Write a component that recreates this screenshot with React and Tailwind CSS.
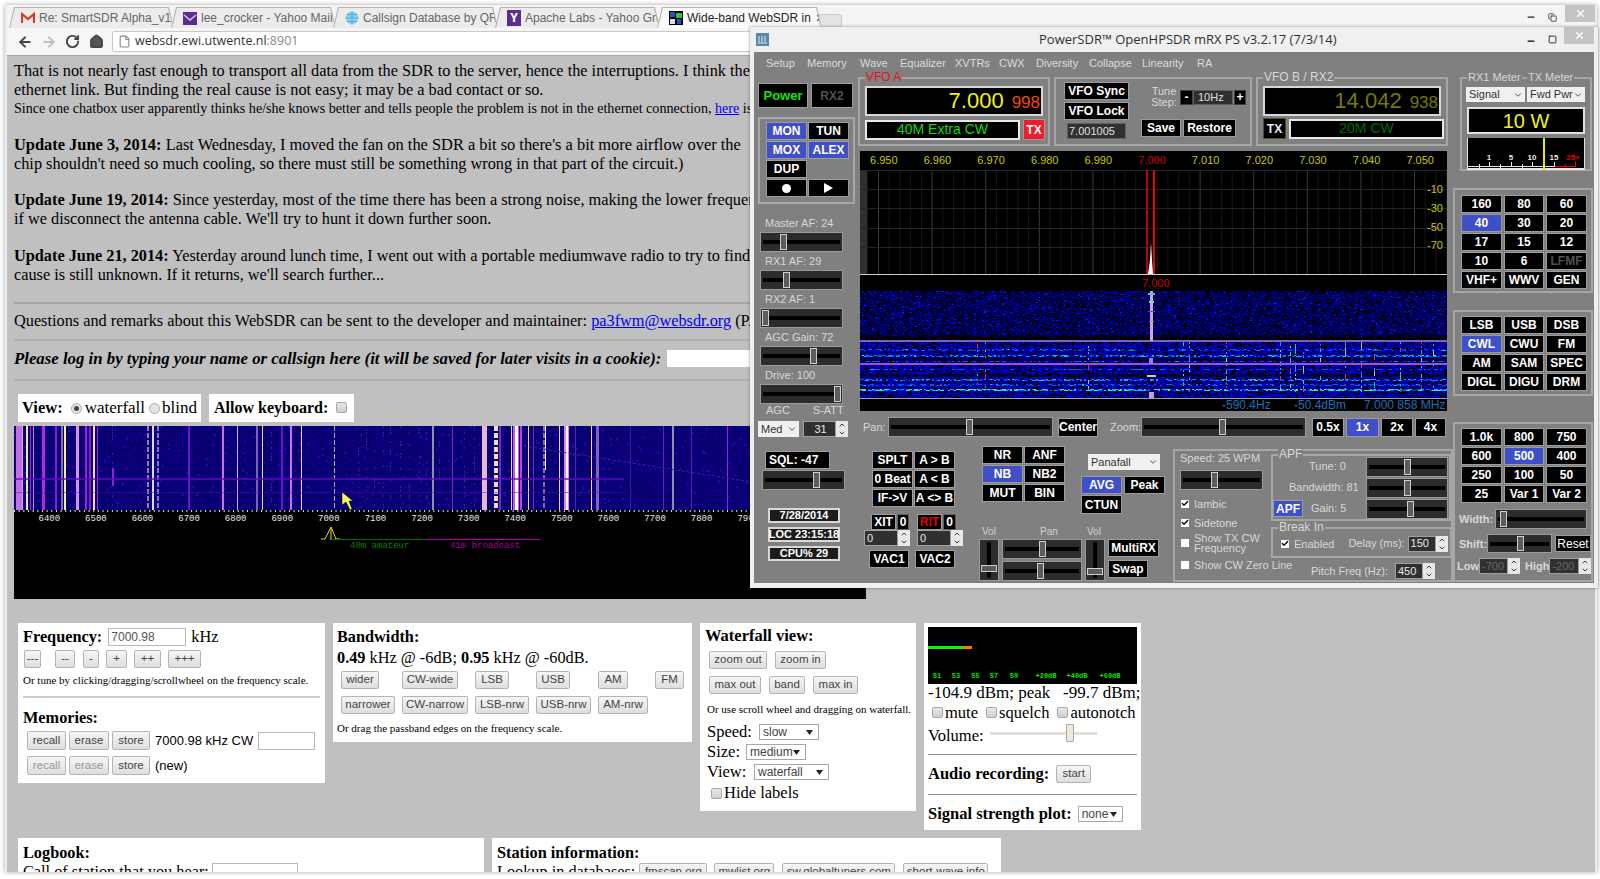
import React from 'react';
import { ArrowLeft, ArrowRight, RotateCw, Home, File, X, Minus, Square, Copy, Check, ChevronDown, ChevronUp, Volume1 } from 'lucide-react';

// --- pixel noise helpers for the waterfalls ---
const seeded = (seed) => {
  let s = seed;
  return () => (s = (s * 16807) % 2147483647) / 2147483647;
};

const Pixels = ({ cells }) =>
  Object.entries(cells).map(([color, d]) => <path key={color} d={d} fill={color} />);

const addCell = (cells, color, x, y, w, h) => {
  cells[color] = (cells[color] || '') + `M${x} ${y}h${w}v${h}h${-w}z`;
};

// browser waterfall, purple on blue: x, width, colour, opacity, dashed
const WEB_LINES = [
  [2, 6, '#c070e0', 1], [8, 1, '#e0a0f0', 1], [12, 2, '#f0e890', 1], [16, 1, '#a020e0', 1], [19, 1, '#d090e0', 0.9],
  [28, 3, '#c030e8', 0.9], [41, 2, '#9020e0', 0.9], [47, 2, '#8070b0', 1], [50, 2, '#f8f080', 1], [62, 3, '#d890e8', 1],
  [71, 2, '#a020e0', 1], [75, 2, '#9020e0', 0.9], [79, 2, '#f0e0a0', 1], [83, 1, '#a020e0', 1],
  [133, 2, '#9080a8', 1, true], [138, 2, '#e8d0f0', 1], [143, 2, '#9070d0', 1, true], [174, 2, '#7010d0', 1],
  [208, 2, '#d070e0', 1], [223, 1, '#d0b0e0', 1], [242, 2, '#8060b0', 1], [248, 1, '#e8d8b0', 1], [267, 2, '#7010d0', 1],
  [276, 2, '#d070e0', 1], [287, 1, '#e8d0c0', 1], [320, 1, '#b0b0a0', 1, true],
  [418, 2, '#9090a0', 1], [438, 1, '#8020d0', 1], [468, 5, '#e8b8d0', 1], [480, 4, '#f0e0b0', 1, true], [485, 2, '#8020d0', 1],
  [497, 1, '#e0d8c0', 1], [499, 6, '#d050f0', 1], [501, 3, '#ffffff', 1], [506, 2, '#c040e0', 1], [514, 1, '#f0d890', 1],
  [519, 1, '#8020d0', 1], [529, 2, '#9060c0', 1, true], [545, 1, '#e0d8e0', 1], [550, 5, '#e080f0', 1], [552, 2, '#ffffff', 1],
  [561, 1, '#5020c0', 1], [577, 1, '#f0d8a0', 1], [582, 3, '#8060c0', 1], [616, 1, '#4018b0', 1], [649, 1, '#6020c0', 1],
  [658, 2, '#9090a0', 1], [677, 1, '#6018c0', 1], [713, 1, '#a020e0', 1],
];

const WebWaterfall = () => {
  const rnd = seeded(77);
  const cells = {};
  for (let y = 0; y < 84; y += 2) {
    for (let x = 0; x < 852; x += 2) {
      const r = rnd();
      if (r < 0.2) addCell(cells, '#0d0084', x, y, 2, 2);
      else if (r < 0.35) addCell(cells, '#070068', x, y, 2, 2);
      else if (r < 0.37) addCell(cells, '#1c0c98', x, y, 2, 2);
    }
  }
  // scattered faint carriers around 7100
  const marks = [98, 344, 352, 360, 369, 376, 386, 395, 405, 412, 425, 450, 460, 286, 257];
  marks.forEach((mx) => {
    for (let y = 0; y < 84; y += 3) {
      if (rnd() < 0.4) addCell(cells, '#4a14b0', mx, y, 1, 2);
    }
  });
  return (
    <svg width="852" height="84" className="block">
      <rect width="852" height="84" fill="#090074" />
      <Pixels cells={cells} />
      {WEB_LINES.map(([x, w, c, o, dashed], i) =>
        dashed ? (
          <line key={i} x1={x + w / 2} x2={x + w / 2} y1="0" y2="84" stroke={c} strokeWidth={w} strokeDasharray="5 2" />
        ) : (
          <rect key={i} x={x} y="0" width={w} height={x === 531 ? 44 : 84} fill={c} opacity={o} />
        )
      )}
      <rect x="531" y="0" width="1" height="44" fill="#f0f0e0" />
      <rect x="98" y="42" width="2" height="18" fill="#9020d0" />
      <rect x="0" y="52" width="610" height="2" fill="#6808c0" opacity="0.7" />
      <rect x="0" y="66" width="610" height="1" fill="#5808b0" opacity="0.5" />
      <line x1="510" y1="20" x2="852" y2="74" stroke="#5018b0" strokeWidth="1" strokeDasharray="3 2" />
    </svg>
  );
};

const SdrWaterfall = () => {
  const rnd = seeded(4242);
  const cells = {};
  const W = 587;
  // quiet part on top
  for (let y = 0; y < 48; y += 1) {
    const fade = y > 42 ? (48 - y) / 6 : 1;
    for (let x = 0; x < W; x += 2) {
      const r = rnd() * fade;
      if (r > 0.97) addCell(cells, '#1414d8', x, y, 2, 1);
      else if (r > 0.82) addCell(cells, '#0000a8', x, y, 2, 1);
      else if (r > 0.5) addCell(cells, '#000070', x, y, 2, 1);
      else if (r > 0.18) addCell(cells, '#000038', x, y, 2, 1);
    }
  }
  // busy part with horizontal bursts
  const rowLevel = (y) => {
    if ([98, 99].includes(y)) return 5;
    if ([88, 89, 64, 65].includes(y)) return 3.5;
    if ([58, 59, 70, 78, 93, 94].includes(y)) return 2.6;
    if ([67, 68, 69, 83, 84, 85].includes(y)) return 0.3;
    return 1.2;
  };
  const cols = ['#000068', '#0000c8', '#0058e8', '#00b8d8', '#30f090'];
  for (let y = 51; y < 107; y += 1) {
    const lvl = rowLevel(y);
    for (let x = 0; x < W; x += 2) {
      const v = Math.floor(rnd() * lvl + rnd() * 0.7);
      if (v > 0 || rnd() < 0.55) addCell(cells, cols[Math.min(v, 4)], x, y, 2, 1);
    }
  }
  // carrier columns
  const carriers = [117, 125, 228, 323, 329, 366, 420, 430, 435, 443, 460, 485, 501, 514, 540, 561, 573];
  const tints = ['#20d080', '#d03060', '#3090f0', '#c0c080', '#20d090'];
  carriers.forEach((cx, i) => {
    for (let y = 51; y < 100; y += 2) {
      if (rnd() < 0.4) addCell(cells, tints[(i + Math.floor(y / 8)) % 5], cx, y, 1, 2);
    }
  });
  return (
    <svg width={W} height="107" className="block">
      <rect width={W} height="107" fill="#000" />
      <Pixels cells={cells} />
      <rect x="0" y="49" width={W} height="2" fill="#8060b8" />
      <rect x="0" y="72" width={W} height="2" fill="#a050d0" />
      <rect x="290" y="0" width="3" height="50" fill="#d0a0e0" />
      <rect x="288" y="2" width="7" height="2" fill="#40d0c0" />
      <rect x="289" y="10" width="5" height="2" fill="#60f090" />
      <rect x="288" y="20" width="7" height="1" fill="#3060f0" />
      <rect x="289" y="30" width="5" height="1" fill="#8090f0" />
      <rect x="289" y="67" width="4" height="6" fill="#9080e0" />
      <rect x="287" y="84" width="9" height="2" fill="#d0d0a0" />
      <rect x="289" y="101" width="5" height="6" fill="#c0a0e0" />
    </svg>
  );
};

// --- PowerSDR widgets ---
const Btn = ({ children, className = '', on, dim }) => (
  <div
    className={`flex items-center justify-center whitespace-nowrap border border-[#9c9c9c] text-[12px] font-bold leading-none ${
      on ? 'bg-[#3f4fc8] text-white' : 'bg-black'
    } ${dim ? 'text-[#505050]' : 'text-white'} ${className}`}
  >
    {children}
  </div>
);

const Slider = ({ pct = 50, className = '' }) => (
  <div className={`relative flex shrink-0 items-center border border-[#9a9a9a] bg-[#2c2c2c] px-[2px] ${className}`}>
    <div className="h-[4px] w-full bg-black" />
    <div
      className="absolute top-[1px] bottom-[1px] w-[7px] border border-[#d0d0d0] bg-[#5c5c5c]"
      style={{ left: `calc(${pct}% - 3px)` }}
    />
  </div>
);

const VSlider = ({ pct = 50 }) => (
  <div className="relative flex h-[42px] w-[20px] shrink-0 justify-center border border-[#9a9a9a] bg-[#2c2c2c] py-[2px]">
    <div className="h-full w-[4px] bg-black" />
    <div
      className="absolute left-[1px] right-[1px] h-[7px] border border-[#d0d0d0] bg-[#5c5c5c]"
      style={{ top: `${pct}%` }}
    />
  </div>
);

const Lbl = ({ children, className = '' }) => (
  <div className={`whitespace-nowrap text-[11px] leading-[12px] text-[#d8d8d8] ${className}`}>{children}</div>
);

const Group = ({ label, labelClass = 'text-[12px] text-[#d8d8d8]', className = '', children, second }) => (
  <div className={`relative shrink-0 border-2 border-[#a6a6a6] ${className}`}>
    {label && (
      <div className={`absolute left-[5px] top-[-8px] bg-[#808080] px-[1px] leading-[12px] ${labelClass}`}>
        {label}
      </div>
    )}
    {second && (
      <div className="absolute left-[65px] top-[-8px] bg-[#808080] px-[1px] text-[11px] leading-[12px] text-[#d8d8d8]">
        {second}
      </div>
    )}
    {children}
  </div>
);

const Spin = ({ value, className = '', faded, light }) => (
  <div className={`flex shrink-0 items-stretch ${className}`}>
    <div
      className={`flex flex-1 items-center overflow-hidden pl-[2px] text-[11px] leading-none ${
        light ? 'justify-center border border-[#a0a0a0] bg-[#303030]' : 'border border-[#a0a0a0] bg-[#303030]'
      } ${faded ? 'text-[#6a6a6a]' : 'text-[#e8e8e8]'}`}
    >
      {value}
    </div>
    <div className="flex w-[12px] flex-col items-center justify-center bg-[#e8e8e8] text-[#404040]">
      <ChevronUp size={8} strokeWidth={3} />
      <ChevronDown size={8} strokeWidth={3} />
    </div>
  </div>
);

const WinSelect = ({ value, className = '' }) => (
  <div className={`flex shrink-0 items-center justify-between bg-[#f0f0f0] pl-[3px] pr-[2px] text-[11px] leading-none text-[#303030] ${className}`}>
    <span>{value}</span>
    <ChevronDown size={10} strokeWidth={2} />
  </div>
);

const WinCheck = ({ checked }) => (
  <div className="flex h-[10px] w-[10px] shrink-0 items-center justify-center border border-[#808080] bg-white text-black">
    {checked && <Check size={9} strokeWidth={4} />}
  </div>
);

const CheckRow = ({ checked, children, className = '' }) => (
  <div className={`flex items-center gap-[4px] text-[11px] leading-[10px] text-[#d8d8d8] ${className}`}>
    <WinCheck checked={checked} />
    <span>{children}</span>
  </div>
);

const SliderBlock = ({ label, pct }) => (
  <div className="flex h-[38px] flex-col pt-[1px]">
    <Lbl className="ml-[7px] h-[13px]">{label}</Lbl>
    <Slider pct={pct} className="ml-[2px] mt-[2px] h-[20px] w-[83px]" />
  </div>
);

const BUTTON_GRID = 'grid grid-cols-[41px_40px_41px] gap-x-[2px] gap-y-[1px] auto-rows-[18px]';

const LeftColumn = () => (
  <div className="w-[104px] shrink-0 pl-[4px]">
    <div className="mt-[9px] flex gap-[3px]">
      <Btn className="h-[25px] w-[50px] !text-[#14e014] text-[13px]">Power</Btn>
      <Btn dim className="h-[25px] w-[42px]">RX2</Btn>
    </div>
    <div className="mt-[9px] h-[87px] w-[97px] border-2 border-[#a8a8a8] pl-[6px] pt-[3px]">
      <div className="grid grid-cols-[41px_41px] gap-x-[1px] gap-y-[1px] auto-rows-[18px]">
        <Btn on>MON</Btn>
        <Btn>TUN</Btn>
        <Btn on>MOX</Btn>
        <Btn on>ALEX</Btn>
        <Btn>DUP</Btn>
        <div />
        <Btn><span className="h-[9px] w-[9px] rounded-full bg-white" /></Btn>
        <Btn>
          <svg width="9" height="10"><polygon points="0,0 9,5 0,10" fill="#fff" /></svg>
        </Btn>
      </div>
    </div>
    <div className="mt-[12px] flex flex-col">
      <SliderBlock label="Master AF:  24" pct={27} />
      <SliderBlock label="RX1 AF:  29" pct={31} />
      <SliderBlock label="RX2 AF:  1" pct={5} />
      <SliderBlock label="AGC Gain:  72" pct={64} />
      <SliderBlock label="Drive:  100" pct={94} />
    </div>
    <div className="ml-[8px] mt-[-3px] flex h-[14px] items-center gap-[23px]">
      <Lbl>AGC</Lbl>
      <Lbl>S-ATT</Lbl>
    </div>
    <div className="mt-[4px] flex gap-[4px]">
      <WinSelect value="Med" className="h-[16px] w-[41px]" />
      <Spin value="31" light className="h-[16px] w-[45px]" />
    </div>
    <Btn className="ml-[7px] mt-[14px] h-[18px] w-[65px] !justify-start pl-[3px]">SQL: -47</Btn>
    <Slider pct={66} className="ml-[4px] mt-[1px] h-[20px] w-[83px]" />
    <div className="ml-[10px] mt-[18px] flex w-[72px] flex-col gap-[4px]">
      {['7/28/2014', 'LOC 23:15:18', 'CPU%  29'].map((t) => (
        <div
          key={t}
          className="flex h-[15px] items-center justify-center whitespace-nowrap border-2 border-[#d8d8d8] bg-[#1c1c1c] text-[11px] font-bold leading-none text-white"
        >
          {t}
        </div>
      ))}
    </div>
  </div>
);

const TopGroups = () => (
  <div className="mt-[3px] flex gap-[4px]">
    <Group label="VFO A" labelClass="text-[12px] text-[#f01010]" className="h-[69px] w-[192px] pl-[5px] pt-[7px]">
      <div className="flex h-[30px] w-[178px] items-baseline justify-end border-2 border-[#d8d8d8] bg-black pr-[1px] leading-[26px]">
        <span className="text-[22px] text-[#f0f020]">7.000</span>
        <span className="ml-[8px] text-[17px] text-[#f04a00]">998</span>
      </div>
      <div className="mt-[3px] flex items-center gap-[3px]">
        <div className="flex h-[20px] w-[155px] items-center justify-center border-2 border-[#e8e8e8] bg-black text-[14px] text-[#10d810]">
          40M Extra CW
        </div>
        <div className="flex h-[21px] w-[22px] items-center justify-center border border-[#9c9c9c] bg-[#f01c2c] text-[12px] font-bold text-white">
          TX
        </div>
      </div>
    </Group>
    <Group className="flex h-[69px] w-[198px]">
      <div className="w-[85px] shrink-0 pl-[8px] pt-[3px]">
        <Btn className="h-[18px] w-[65px]">VFO Sync</Btn>
        <Btn className="mt-[2px] h-[18px] w-[65px]">VFO Lock</Btn>
        <div className="ml-[3px] mt-[3px] flex h-[16px] w-[59px] items-center border border-[#606060] bg-[#303030] pl-[1px] text-[11px] leading-none text-[#e0e0e0]">
          7.001005
        </div>
      </div>
      <div className="flex-1 pt-[4px]">
        <div className="flex h-[28px] items-center">
          <Lbl className="ml-[7px] w-[32px] !whitespace-normal text-center !leading-[11px]">Tune Step:</Lbl>
          <Btn className="h-[15px] w-[13px] !border-[#404040]">-</Btn>
          <div className="flex h-[15px] w-[40px] items-center border border-[#606060] bg-[#303030] pl-[4px] text-[11px] leading-none text-[#e0e0e0]">10Hz</div>
          <Btn className="ml-[1px] h-[15px] w-[12px] !border-[#404040]">+</Btn>
        </div>
        <div className="mt-[8px] flex gap-[2px]">
          <Btn className="h-[18px] w-[40px]">Save</Btn>
          <Btn className="h-[18px] w-[53px]">Restore</Btn>
        </div>
      </div>
    </Group>
    <Group label="VFO B / RX2" className="h-[69px] w-[192px] pl-[5px] pt-[7px]">
      <div className="flex h-[30px] w-[178px] items-baseline justify-end border-2 border-[#d8d8d8] bg-black pr-[1px] leading-[26px]">
        <span className="text-[22px] text-[#787800]">14.042</span>
        <span className="ml-[8px] text-[17px] text-[#787800]">938</span>
      </div>
      <div className="mt-[2px] flex items-center gap-[3px]">
        <div className="flex h-[21px] w-[23px] items-center justify-center border border-[#505030] bg-black text-[12px] font-bold text-[#e8e8e8]">
          TX
        </div>
        <div className="flex h-[20px] w-[155px] items-center justify-center border-2 border-[#e8e8e8] bg-black text-[14px] text-[#006800]">
          20M CW
        </div>
      </div>
    </Group>
  </div>
);

const FREQS = ['6.950', '6.960', '6.970', '6.980', '6.990', '7.000', '7.010', '7.020', '7.030', '7.040', '7.050'];

const Spectrum = () => (
  <div className="ml-[2px] mt-[5px] w-[587px] bg-black">
    <div className="ml-[-3px] grid h-[19px] w-[590px] grid-cols-11 items-center text-center text-[11px] leading-none">
      {FREQS.map((f) => (
        <span key={f} className={f === '7.000' ? 'text-[#d00000]' : 'text-[#c8c800]'}>{f}</span>
      ))}
    </div>
    <div className="relative h-[104px]">
      <svg width="587" height="104" className="block">
        <rect x="0" y="0" width="7" height="104" fill="#303030" />
        {Array.from({ length: 55 }).map((_, i) => {
          const x = 7.8 + i * 10.72;
          const major = i % 5 === 1;
          return <line key={i} x1={x} x2={x} y1="0" y2="104" stroke={major ? '#3c3c3c' : '#161616'} />;
        })}
        {[0, 19, 38, 58, 77].map((y) => (
          <line key={y} x1="0" x2="587" y1={y + 0.5} y2={y + 0.5} stroke="#242424" />
        ))}
        <rect x="286" y="0" width="2" height="104" fill="#c00000" />
        <rect x="293" y="0" width="2" height="104" fill="#f00000" />
        <path d="M288 104 L290 90 L291 72 L292 90 L293 104" fill="#fff" />
      </svg>
      {[['-10', 'top-[13px]'], ['-30', 'top-[32px]'], ['-50', 'top-[51px]'], ['-70', 'top-[69px]']].map(([t, c]) => (
        <span key={t} className={`absolute left-[567px] text-[11px] leading-[13px] text-[#c8c800] ${c}`}>{t}</span>
      ))}
    </div>
    <div className="h-[1px] bg-[#d0d0d0]" />
    <div className="h-[16px] pl-[282px] text-[11px] leading-[16px] text-[#c80000]">7.000</div>
    <SdrWaterfall />
    <div className="h-[1px] bg-[#a0a0a0]" />
    <div className="flex h-[12px] text-[12px] leading-[12px] text-[#1a70b8]">
      <span className="ml-[362px] w-[72px]">-590.4Hz</span>
      <span className="w-[70px]">-50.4dBm</span>
      <span className="whitespace-nowrap">7.000 858 MHz</span>
    </div>
  </div>
);

const PanRow = () => (
  <div className="mt-[6px] flex h-[20px] items-center">
    <Lbl className="ml-[5px] w-[25px]">Pan:</Lbl>
    <Slider pct={49} className="h-[20px] w-[165px]" />
    <Btn className="ml-[5px] h-[19px] w-[40px]">Center</Btn>
    <Lbl className="ml-[12px] w-[31px]">Zoom:</Lbl>
    <Slider pct={49} className="h-[20px] w-[165px]" />
    <Btn className="ml-[6px] h-[19px] w-[32px]">0.5x</Btn>
    <Btn on className="ml-[2px] h-[19px] w-[33px]">1x</Btn>
    <Btn className="ml-[2px] h-[19px] w-[32px]">2x</Btn>
    <Btn className="ml-[2px] h-[19px] w-[31px]">4x</Btn>
  </div>
);

const SplitSection = () => (
  <div className="w-[121px] shrink-0 pt-[5px]">
    <div className="ml-[14px] grid grid-cols-[41px_41px] gap-x-[1px] gap-y-[1px] auto-rows-[18px]">
      <Btn>SPLT</Btn><Btn>A &gt; B</Btn>
      <Btn>0 Beat</Btn><Btn>A &lt; B</Btn>
      <Btn>IF-&gt;V</Btn><Btn>A &lt;&gt; B</Btn>
    </div>
    <div className="ml-[6px] mt-[7px] flex gap-[7px]">
      <div className="w-[46px]">
        <div className="ml-[7px] flex gap-[1px]">
          <Btn className="h-[16px] w-[25px]">XIT</Btn>
          <Btn className="h-[16px] w-[12px] !border-[#606060]">0</Btn>
        </div>
        <Spin value="0" className="h-[16px] w-[46px]" />
      </div>
      <div className="w-[46px]">
        <div className="flex gap-[1px]">
          <Btn className="h-[16px] w-[25px] !text-[#e00000]">RIT</Btn>
          <Btn className="h-[16px] w-[13px] !border-[#606060]">0</Btn>
        </div>
        <Spin value="0" className="h-[16px] w-[46px]" />
      </div>
    </div>
    <div className="ml-[11px] mt-[4px] flex gap-[6px]">
      <Btn className="h-[18px] w-[40px]">VAC1</Btn>
      <Btn className="h-[18px] w-[40px]">VAC2</Btn>
    </div>
  </div>
);

const NoiseSection = () => (
  <div className="w-[194px] shrink-0">
    <div className="flex h-[79px]">
      <div className="ml-[3px] w-[99px] shrink-0">
        <div className="grid grid-cols-[41px_41px] gap-x-[1px] gap-y-[1px] auto-rows-[18px]">
          <Btn>NR</Btn><Btn>ANF</Btn>
          <Btn on>NB</Btn><Btn>NB2</Btn>
          <Btn>MUT</Btn><Btn>BIN</Btn>
        </div>
      </div>
      <div>
        <WinSelect value="Panafall" className="ml-[7px] mt-[8px] h-[16px] w-[72px]" />
        <div className="mt-[6px] flex gap-[2px]">
          <Btn on className="h-[18px] w-[41px]">AVG</Btn>
          <Btn className="h-[18px] w-[41px]">Peak</Btn>
        </div>
        <Btn className="mt-[1px] h-[19px] w-[41px]">CTUN</Btn>
      </div>
    </div>
    <div className="flex h-[14px] items-center text-[10px] leading-none text-[#d0d0d0]">
      <span className="ml-[3px] w-[58px]">Vol</span>
      <span className="w-[47px]">Pan</span>
      <span>Vol</span>
    </div>
    <div className="flex">
      <VSlider pct={62} />
      <div className="ml-[3px] flex flex-col gap-[2px]">
        <Slider pct={50} className="h-[20px] w-[80px]" />
        <Slider pct={47} className="h-[20px] w-[80px]" />
      </div>
      <div className="ml-[3px]"><VSlider pct={70} /></div>
      <div className="ml-[3px]">
        <Btn className="h-[18px] w-[51px]">MultiRX</Btn>
        <Btn className="mt-[3px] h-[18px] w-[40px]">Swap</Btn>
      </div>
    </div>
  </div>
);

const ApfRow = ({ children, pct }) => (
  <div className="flex h-[21px] items-center">
    <div className="flex w-[93px] items-center whitespace-nowrap">{children}</div>
    <Slider pct={pct} className="h-[20px] w-[82px]" />
  </div>
);

const CwSection = () => (
  <Group className="mt-[3px] flex h-[133px] w-[280px]">
    <div className="w-[96px] shrink-0 pl-[5px] pt-[1px]">
      <Lbl>Speed:  25 WPM</Lbl>
      <Slider pct={41} className="mt-[6px] h-[20px] w-[83px]" />
      <CheckRow checked className="mt-[7px] h-[13px]">Iambic</CheckRow>
      <CheckRow checked className="mt-[6px] h-[13px]">Sidetone</CheckRow>
      <CheckRow className="mt-[4px] h-[20px]">Show TX CW Frequency</CheckRow>
      <CheckRow className="mt-[6px] h-[12px] w-[120px] whitespace-nowrap">Show CW Zero Line</CheckRow>
    </div>
    <div className="w-[180px] shrink-0">
      <Group label="APF" className="mt-[3px] h-[67px] w-[180px] pl-[0px] text-[11px] text-[#d8d8d8]">
        <ApfRow pct={50}><span className="ml-[36px]">Tune:  0</span></ApfRow>
        <ApfRow pct={50}><span className="ml-[16px]">Bandwidth:  81</span></ApfRow>
        <ApfRow pct={54}>
          <Btn on className="h-[17px] w-[30px]">APF</Btn>
          <span className="ml-[8px]">Gain:  5</span>
        </ApfRow>
      </Group>
      <Group label="Break In" className="mt-[6px] flex h-[31px] w-[181px] items-center pl-[7px] pt-[2px] text-[11px] text-[#d8d8d8]">
        <CheckRow checked>Enabled</CheckRow>
        <span className="ml-[14px] whitespace-nowrap">Delay (ms):</span>
        <Spin value="150" className="ml-[3px] h-[16px] w-[40px]" />
      </Group>
      <div className="mt-[5px] flex items-center justify-end pr-[16px] text-[11px] text-[#d8d8d8]">
        <span className="mr-[7px]">Pitch Freq (Hz):</span>
        <Spin value="450" className="h-[16px] w-[40px]" />
      </div>
    </div>
  </Group>
);

const MeterGroup = () => (
  <Group label="RX1 Meter" labelClass="text-[11px] text-[#d8d8d8]" second="TX Meter" className="ml-[7px] mt-[3px] h-[94px] w-[132px] pl-[4px] pt-[8px]">
    <div className="flex gap-[2px]">
      <WinSelect value="Signal" className="h-[15px] w-[59px]" />
      <WinSelect value="Fwd Pwr" className="h-[15px] w-[58px]" />
    </div>
    <div className="ml-[1px] mt-[5px] flex h-[27px] w-[118px] items-center justify-center border-2 border-[#e0e0e0] bg-black text-[20px] leading-none text-[#f0f020]">
      10 W
    </div>
    <svg width="118" height="32" className="ml-[1px] mt-[4px] block">
      <rect width="118" height="32" fill="#000" />
      <rect x="0" y="0" width="1" height="32" fill="#e0e0e0" />
      <rect x="117" y="0" width="1" height="32" fill="#e0e0e0" />
      <rect x="1" y="28" width="88" height="1" fill="#e8e8e8" />
      <rect x="88" y="28" width="21" height="1" fill="#f00000" />
      <rect x="1" y="30" width="116" height="2" fill="#e8e8e8" />
      {[12, 22, 33, 44, 55, 65, 76].map((x) => (
        <rect key={x} x={x} y={[22, 44, 65].includes(x) ? 24 : 26} width="1" height="4" fill="#e8e8e8" />
      ))}
      <rect x="87" y="24" width="1" height="5" fill="#e8e8e8" />
      <rect x="98" y="26" width="1" height="3" fill="#f00000" />
      <rect x="108" y="23" width="1" height="6" fill="#f00000" />
      <g fontSize="8" fontWeight="bold" fill="#e8e8e8" textAnchor="middle" fontFamily="Liberation Sans, sans-serif">
        <text x="22" y="22">1</text>
        <text x="44" y="22">5</text>
        <text x="65" y="22">10</text>
        <text x="87" y="22">15</text>
        <text x="106" y="22" fill="#f00000">25+</text>
      </g>
      <rect x="76" y="0" width="2" height="32" fill="#e8e800" />
    </svg>
  </Group>
);

const RightColumn = () => (
  <div className="w-[140px] shrink-0">
    <MeterGroup />
    <Group className="mt-[17px] h-[105px] w-[140px] pl-[6px] pt-[5px]">
      <div className={BUTTON_GRID}>
        <Btn>160</Btn><Btn>80</Btn><Btn>60</Btn>
        <Btn on>40</Btn><Btn>30</Btn><Btn>20</Btn>
        <Btn>17</Btn><Btn>15</Btn><Btn>12</Btn>
        <Btn>10</Btn><Btn>6</Btn><Btn dim>LFMF</Btn>
        <Btn>VHF+</Btn><Btn>WWV</Btn><Btn>GEN</Btn>
      </div>
    </Group>
    <Group className="mt-[17px] h-[86px] w-[140px] pl-[6px] pt-[4px]">
      <div className={BUTTON_GRID}>
        <Btn>LSB</Btn><Btn>USB</Btn><Btn>DSB</Btn>
        <Btn on>CWL</Btn><Btn>CWU</Btn><Btn>FM</Btn>
        <Btn>AM</Btn><Btn>SAM</Btn><Btn>SPEC</Btn>
        <Btn>DIGL</Btn><Btn>DIGU</Btn><Btn>DRM</Btn>
      </div>
    </Group>
    <Group className="mt-[26px] h-[160px] w-[140px] pt-[4px]">
      <div className={`ml-[6px] ${BUTTON_GRID}`}>
        <Btn>1.0k</Btn><Btn>800</Btn><Btn>750</Btn>
        <Btn>600</Btn><Btn on>500</Btn><Btn>400</Btn>
        <Btn>250</Btn><Btn>100</Btn><Btn>50</Btn>
        <Btn>25</Btn><Btn>Var 1</Btn><Btn>Var 2</Btn>
      </div>
      <div className="ml-[4px] mt-[6px] flex h-[20px] items-center font-bold">
        <Lbl className="w-[36px] font-bold">Width:</Lbl>
        <Slider pct={8} className="h-[20px] w-[92px]" />
      </div>
      <div className="ml-[4px] mt-[5px] flex h-[19px] items-center">
        <Lbl className="w-[28px] font-bold">Shift:</Lbl>
        <Slider pct={50} className="h-[19px] w-[65px]" />
        <Btn className="ml-[3px] h-[17px] w-[37px] !font-normal text-[11px]">Reset</Btn>
      </div>
      <div className="ml-[2px] mt-[5px] flex h-[16px] items-center">
        <Lbl className="w-[22px] font-bold">Low</Lbl>
        <Spin value="-700" faded className="h-[16px] w-[41px]" />
        <Lbl className="ml-[5px] w-[25px] font-bold">High</Lbl>
        <Spin value="-200" faded className="h-[16px] w-[42px]" />
      </div>
    </Group>
  </div>
);

const PowerSdr = () => (
  <div className="absolute left-[750px] top-[27px] w-[848px] bg-[#f0f0f0] px-[4px] pb-[5px] font-['Liberation_Sans',sans-serif] shadow-[0_0_3px_rgba(0,0,0,0.4)]">
    <div className="flex h-[25px] items-center">
      <svg width="13" height="13" className="ml-[2px] shrink-0">
        <rect width="13" height="13" fill="#5a87a8" />
        <path d="M2 10h9M3 3v6M6 3v6M9 3v6" stroke="#dce8f0" fill="none" />
      </svg>
      <div className="ml-[270px] flex-1 whitespace-nowrap font-['Open_Sans',sans-serif] text-[13px] leading-none text-[#303030]">
        PowerSDR™ OpenHPSDR mRX PS v3.2.17 (7/3/14)
      </div>
      <Minus size={10} className="mr-[12px] mt-[3px] text-black" strokeWidth={3} />
      <Square size={9} className="mr-[7px] text-black" strokeWidth={2} />
      <div className="flex h-[17px] w-[30px] items-center justify-center self-start bg-[#c4c4c4] text-white">
        <X size={11} strokeWidth={3} />
      </div>
    </div>
    <div className="h-[531px] w-[840px] bg-[#808080]">
      <div className="flex h-[22px] items-center pl-[12px] text-[11px] leading-none text-[#dcdcdc]">
        <span className="w-[41px]">Setup</span>
        <span className="w-[53px]">Memory</span>
        <span className="w-[40px]">Wave</span>
        <span className="w-[55px]">Equalizer</span>
        <span className="w-[44px]">XVTRs</span>
        <span className="w-[37px]">CWX</span>
        <span className="w-[53px]">Diversity</span>
        <span className="w-[53px]">Collapse</span>
        <span className="w-[55px]">Linearity</span>
        <span>RA</span>
      </div>
      <div className="flex">
        <LeftColumn />
        <div className="w-[595px] shrink-0">
          <TopGroups />
          <Spectrum />
          <PanRow />
          <div className="mt-[9px] flex">
            <SplitSection />
            <NoiseSection />
            <CwSection />
          </div>
        </div>
        <RightColumn />
      </div>
    </div>
  </div>
);

// --- browser chrome ---
const GmailIcon = () => (
  <svg width="14" height="12" viewBox="0 0 14 12" className="shrink-0">
    <path d="M1 11V2l6 5 6-5v9" fill="none" stroke="#d93a2b" strokeWidth="2.2" />
  </svg>
);
const MailIcon = () => (
  <svg width="14" height="13" viewBox="0 0 14 13" className="shrink-0">
    <rect width="14" height="13" fill="#5c2d91" />
    <path d="M1 3l6 5 6-5" fill="none" stroke="#d8c8f0" strokeWidth="1.4" />
  </svg>
);
const GlobeIcon = () => (
  <svg width="14" height="14" viewBox="0 0 14 14" className="shrink-0">
    <circle cx="7" cy="7" r="6.5" fill="#8fd0f0" />
    <path d="M0.5 7h13M7 .5v13M2 3.5h10M2 10.5h10" stroke="#4a9fd0" strokeWidth="0.8" />
  </svg>
);
const YahooIcon = () => (
  <div className="flex h-[16px] w-[14px] shrink-0 items-center justify-center bg-[#5c2d91] text-[12px] font-bold leading-none text-white">Y</div>
);
const SdrIcon = () => (
  <svg width="14" height="14" viewBox="0 0 14 14" className="shrink-0">
    <rect width="14" height="14" fill="#000" />
    <rect x="1" y="1" width="5" height="5" fill="#2050d0" />
    <rect x="7" y="2" width="6" height="5" fill="#30c030" />
    <rect x="1" y="8" width="5" height="5" fill="#e0e0e0" />
    <rect x="8" y="8" width="4" height="5" fill="#2050d0" />
  </svg>
);

const Tab = ({ icon, title, active, extra }) => (
  <div className="relative ml-[-3px] h-[21px] w-[165px] shrink-0 bg-[#b4b4b4] [clip-path:polygon(0_100%,5px_0,calc(100%-5px)_0,100%_100%)]">
    <div
      className={`absolute inset-x-[1px] bottom-0 top-[1px] flex items-center pl-[11px] pr-[9px] [clip-path:polygon(0_100%,5px_0,calc(100%-5px)_0,100%_100%)] ${
        active ? 'bg-[#fafafa]' : 'bg-[#ececec]'
      }`}
    >
      {icon}
      <span className={`ml-[4px] flex-1 whitespace-nowrap font-['Liberation_Sans',sans-serif] text-[12px] leading-none ${active ? 'text-[#222]' : 'text-[#666]'}`}>
        {title}
      </span>
      {extra}
      <X size={10} strokeWidth={3} className="ml-[4px] shrink-0 text-[#555]" />
    </div>
  </div>
);

const TabBar = () => (
  <div className="flex h-[23px] items-end bg-[#f4f4f4] pl-[5px]">
    <Tab icon={<GmailIcon />} title="Re: SmartSDR Alpha_v1.2." />
    <Tab icon={<MailIcon />} title="lee_crocker - Yahoo Mail" />
    <Tab icon={<GlobeIcon />} title="Callsign Database by QRZ" />
    <Tab icon={<YahooIcon />} title="Apache Labs - Yahoo Gro" />
    <Tab active icon={<SdrIcon />} title="Wide-band WebSDR in" extra={<Volume1 size={12} className="text-[#333]" fill="#333" />} />
    <div className="ml-[-6px] h-[14px] w-[26px] self-end rounded-t-[3px] border border-[#c8c8c8] bg-[#e4e4e8]" />
    <div className="flex-1" />
    <div className="flex items-center self-start pt-[7px]">
      <Minus size={10} className="mr-[12px] text-[#222]" strokeWidth={3} />
      <Copy size={9} className="mr-[8px] text-[#222]" strokeWidth={2} />
    </div>
    <div className="flex h-[17px] w-[30px] items-center justify-center self-start bg-[#c4c4c4] text-white">
      <X size={11} strokeWidth={3} />
    </div>
  </div>
);

const Toolbar = () => (
  <div className="flex h-[28px] items-center border-b border-[#a8a8a8] bg-[#f6f6f6] pl-[10px] text-[#444]">
    <ArrowLeft size={16} strokeWidth={3} />
    <ArrowRight size={16} strokeWidth={3} className="ml-[8px] text-[#c0c0c0]" />
    <RotateCw size={15} strokeWidth={3} className="ml-[8px]" />
    <Home size={15} strokeWidth={2.5} className="ml-[9px]" fill="#555" />
    <div className="ml-[8px] flex h-[21px] flex-1 items-center rounded-[2px] border border-[#c8c8c8] bg-white pl-[5px] font-['Open_Sans',sans-serif] text-[12.5px] leading-none">
      <File size={13} className="text-[#888]" />
      <span className="ml-[4px] text-[#333]">websdr.ewi.utwente.nl</span>
      <span className="text-[#888]">:8901</span>
    </div>
  </div>
);

// --- page widgets ---
const PageBtn = ({ children, className = '', off }) => (
  <div
    className={`flex h-[18px] shrink-0 items-center justify-center whitespace-nowrap rounded-[2px] border border-[#b4b4b4] bg-gradient-to-b from-[#f6f6f6] to-[#dedede] font-['Liberation_Sans',sans-serif] text-[11.5px] leading-none ${
      off ? 'text-[#999]' : 'text-[#444]'
    } ${className}`}
  >
    {children}
  </div>
);

const PageSelect = ({ value, className = '' }) => (
  <div className={`flex h-[16px] shrink-0 items-center justify-between border border-[#a8a8a8] bg-white pl-[3px] pr-[5px] font-['Liberation_Sans',sans-serif] text-[12px] leading-none text-[#444] ${className}`}>
    <span>{value}</span>
    <svg width="7" height="5"><polygon points="0,0 7,0 3.5,5" fill="#222" /></svg>
  </div>
);

const PageCheck = () => (
  <span className="inline-block h-[11px] w-[11px] shrink-0 rounded-[2px] border border-[#a8a8a8] bg-gradient-to-b from-[#e8e8e8] to-[#cfcfcf]" />
);

const Hr = ({ className = '' }) => <div className={`h-[2px] bg-[#a4a4a4] ${className}`} />;

const FrequencyCard = () => (
  <div className="h-[160px] w-[307px] shrink-0 bg-white px-[5px] pt-[5px]">
    <div className="flex h-[18px] items-center">
      <b>Frequency:</b>
      <div className="ml-[6px] flex h-[18px] w-[78px] items-center border border-[#b8b8b8] pl-[2px] font-['Liberation_Sans',sans-serif] text-[12px] text-[#555]">7000.98</div>
      <span className="ml-[5px]">kHz</span>
    </div>
    <div className="ml-[1px] mt-[4px] flex">
      <PageBtn className="w-[17px]">---</PageBtn>
      <PageBtn className="ml-[14px] w-[20px]">--</PageBtn>
      <PageBtn className="ml-[8px] w-[16px]">-</PageBtn>
      <PageBtn className="ml-[7px] w-[21px]">+</PageBtn>
      <PageBtn className="ml-[7px] w-[27px]">++</PageBtn>
      <PageBtn className="ml-[7px] w-[33px]">+++</PageBtn>
    </div>
    <div className="mt-[6px] whitespace-nowrap text-[11px] leading-[13px]">Or tune by clicking/dragging/scrollwheel on the frequency scale.</div>
    <div className="mt-[9px] h-[2px] bg-[#cccccc]" />
    <b className="mt-[11px] block leading-[18px]">Memories:</b>
    <div className="ml-[4px] mt-[4px] flex items-center gap-[3px] font-['Liberation_Sans',sans-serif] text-[13px]">
      <PageBtn className="h-[19px] w-[39px]">recall</PageBtn>
      <PageBtn className="h-[19px] w-[40px]">erase</PageBtn>
      <PageBtn className="h-[19px] w-[38px]">store</PageBtn>
      <span className="ml-[2px] whitespace-nowrap">7000.98 kHz CW</span>
      <div className="ml-[2px] h-[18px] w-[57px] border border-[#b8b8b8]" />
    </div>
    <div className="ml-[4px] mt-[5px] flex items-center gap-[3px] font-['Liberation_Sans',sans-serif] text-[13px]">
      <PageBtn off className="h-[19px] w-[39px]">recall</PageBtn>
      <PageBtn off className="h-[19px] w-[40px]">erase</PageBtn>
      <PageBtn className="h-[19px] w-[38px]">store</PageBtn>
      <span className="ml-[2px]">(new)</span>
    </div>
  </div>
);

const BandwidthCard = () => (
  <div className="h-[119px] w-[359px] shrink-0 bg-white px-[4px] pt-[5px]">
    <b className="block leading-[18px]">Bandwidth:</b>
    <div className="mt-[2px] leading-[19px]"><b>0.49</b> kHz @ -6dB; <b>0.95</b> kHz @ -60dB.</div>
    <div className="ml-[4px] mt-[4px] grid grid-cols-[61px_73px_61px_62px_57px_auto] gap-y-[7px] justify-items-start">
      <PageBtn className="w-[38px]">wider</PageBtn>
      <PageBtn className="w-[56px]">CW-wide</PageBtn>
      <PageBtn className="w-[34px]">LSB</PageBtn>
      <PageBtn className="w-[34px]">USB</PageBtn>
      <PageBtn className="w-[30px]">AM</PageBtn>
      <PageBtn className="w-[29px]">FM</PageBtn>
      <PageBtn className="w-[54px]">narrower</PageBtn>
      <PageBtn className="w-[66px]">CW-narrow</PageBtn>
      <PageBtn className="w-[54px]">LSB-nrw</PageBtn>
      <PageBtn className="w-[55px]">USB-nrw</PageBtn>
      <PageBtn className="w-[50px]">AM-nrw</PageBtn>
    </div>
    <div className="mt-[8px] text-[11px] leading-[13px]">Or drag the passband edges on the frequency scale.</div>
  </div>
);

const WaterfallCard = () => (
  <div className="h-[188px] w-[216px] shrink-0 bg-white px-[5px] pt-[4px]">
    <b className="block text-[16.5px] leading-[18px]">Waterfall view:</b>
    <div className="ml-[4px] mt-[6px] flex gap-[8px]">
      <PageBtn className="w-[58px]">zoom out</PageBtn>
      <PageBtn className="w-[51px]">zoom in</PageBtn>
    </div>
    <div className="ml-[4px] mt-[7px] flex gap-[8px]">
      <PageBtn className="w-[52px]">max out</PageBtn>
      <PageBtn className="w-[36px]">band</PageBtn>
      <PageBtn className="w-[45px]">max in</PageBtn>
    </div>
    <div className="ml-[2px] mt-[9px] whitespace-nowrap text-[11px] leading-[13px]">Or use scroll wheel and dragging on waterfall.</div>
    <div className="ml-[2px] mt-[8px] flex flex-col gap-[4px] text-[16.5px] leading-[16px]">
      <div className="flex items-center"><span className="w-[52px]">Speed:</span><PageSelect value="slow" className="w-[60px]" /></div>
      <div className="flex items-center"><span className="w-[39px]">Size:</span><PageSelect value="medium" className="w-[60px]" /></div>
      <div className="flex items-center"><span className="w-[47px]">View:</span><PageSelect value="waterfall" className="w-[75px]" /></div>
    </div>
    <div className="ml-[6px] mt-[4px] flex items-center gap-[2px] text-[16.5px] leading-[18px]"><PageCheck /><span>Hide labels</span></div>
  </div>
);

const METER_LABELS = [['S1', 9], ['S3', 28], ['S5', 47.5], ['S7', 66], ['S9', 86], ['+20dB', 118], ['+40dB', 149], ['+60dB', 182]];

const SignalCard = () => (
  <div className="h-[207px] w-[217px] shrink-0 bg-white px-[4px] pt-[4px]">
    <svg width="209" height="57" className="block">
      <rect width="209" height="57" fill="#000" />
      <rect x="0" y="19" width="35" height="3" fill="#10f010" />
      <rect x="35" y="19" width="9" height="3" fill="#f08000" />
      <g fontSize="7" fill="#10e010" textAnchor="middle" fontFamily="Liberation Mono, monospace" fontWeight="bold">
        {METER_LABELS.map(([t, x]) => (
          <text key={t} x={x} y="51">{t}</text>
        ))}
      </g>
    </svg>
    <div className="mt-[0px] whitespace-pre text-[17px] leading-[18px]">-104.9 dBm; peak   -99.7 dBm;</div>
    <div className="ml-[4px] mt-[1px] flex items-center text-[16.5px] leading-[19px]">
      <PageCheck /><span className="ml-[2px]">mute</span>
      <span className="ml-[8px]"><PageCheck /></span><span className="ml-[2px]">squelch</span>
      <span className="ml-[8px]"><PageCheck /></span><span className="ml-[2px]">autonotch</span>
    </div>
    <div className="mt-[4px] flex h-[20px] items-center text-[16.5px]">
      <span className="w-[62px]">Volume:</span>
      <div className="relative mb-[5px] h-[3px] w-[107px] bg-[#e2ded8]">
        <div className="absolute left-[76px] top-[-8px] h-[18px] w-[8px] rounded-[1px] border border-[#b0a8a0] bg-[#ece8e0]" />
      </div>
    </div>
    <div className="mt-[8px] h-[1px] bg-[#909090]" />
    <div className="mt-[10px] flex items-center leading-[18px]">
      <b className="text-[16.5px]">Audio recording:</b>
      <PageBtn className="ml-[7px] w-[35px]">start</PageBtn>
    </div>
    <div className="mt-[11px] h-[1px] bg-[#909090]" />
    <div className="mt-[10px] flex items-center leading-[18px]">
      <b className="text-[16.5px]">Signal strength plot:</b>
      <PageSelect value="none" className="ml-[6px] w-[45px]" />
    </div>
  </div>
);

const Page = () => (
  <div className="h-[816px] overflow-hidden bg-[#c0c0c0] pl-[7px] pt-[5px] font-['Liberation_Serif',serif] text-[16.3px] text-black">
    <div className="whitespace-nowrap leading-[19px]">
      <div>That is not nearly fast enough to transport all data from the SDR to the server, hence the interruptions. I think the problem is in the</div>
      <div>ethernet link. But finding the real cause is not easy; it may be a bad contact or so.</div>
      <div className="text-[14.1px]">Since one chatbox user apparently thinks he/she knows better and tells people the problem is not in the ethernet connection, <span className="text-[#0000ee] underline">here</span> is some more</div>
      <div className="mt-[17px] text-[16.4px]"><b>Update June 3, 2014:</b> Last Wednesday, I moved the fan on the SDR a bit so there's a bit more airflow over the</div>
      <div>chip shouldn't need so much cooling, so there must still be something wrong in that part of the circuit.)</div>
      <div className="mt-[17px]"><b>Update June 19, 2014:</b> Since yesterday, most of the time there has been a strong noise, making the lower frequencies unusable,</div>
      <div>if we disconnect the antenna cable. We'll try to hunt it down further soon.</div>
      <div className="mt-[18px]"><b>Update June 21, 2014:</b> Yesterday around lunch time, I went out with a portable mediumwave radio to try to find the source;</div>
      <div>cause is still unknown. If it returns, we'll search further...</div>
      <Hr className="mt-[18px] w-[1500px]" />
      <div className="mt-[7px]">Questions and remarks about this WebSDR can be sent to the developer and maintainer: <span className="text-[#0000ee] underline">pa3fwm@websdr.org</span> (PA3FWM)</div>
      <Hr className="mt-[9px] w-[1500px] !bg-[#b0b0b0]" />
      <div className="mt-[8px] flex items-center text-[16.8px] font-bold italic">
        <span>Please log in by typing your name or callsign here (it will be saved for later visits in a cookie):</span>
        <div className="ml-[6px] h-[17px] w-[100px] bg-white" />
      </div>
      <Hr className="mt-[11px] w-[1500px] !bg-[#b0b0b0]" />
    </div>
    <div className="ml-[4px] mt-[13px] flex h-[28px] gap-[8px]">
      <div className="flex w-[183px] items-center bg-white pl-[4px]">
        <b className="text-[16.5px]">View:</b>
        <span className="ml-[8px] flex h-[11px] w-[11px] items-center justify-center rounded-full border border-[#a8a8a8] bg-[#e4e4e4]"><span className="h-[5px] w-[5px] rounded-full bg-[#444]" /></span>
        <span className="ml-[3px] text-[17px]">waterfall</span>
        <span className="ml-[4px] h-[11px] w-[11px] rounded-full border border-[#a8a8a8] bg-[#e4e4e4]" />
        <span className="ml-[2px] text-[17px]">blind</span>
      </div>
      <div className="flex w-[145px] items-center bg-white pl-[5px]">
        <b className="text-[16px]">Allow keyboard:</b>
        <span className="ml-[8px]"><PageCheck /></span>
      </div>
    </div>
    <div className="relative mt-[4px] h-[173px] w-[852px] bg-black">
      <WebWaterfall />
      <svg width="852" height="3" className="block">
        {Array.from({ length: 185 }).map((_, i) => (
          <rect key={i} x={i * 4.66} y="0" width="1" height="2" fill="#e0e0e0" />
        ))}
      </svg>
      <div className="grid h-[13px] grid-cols-[repeat(18,46.6px)] pl-[12px] text-center font-['Liberation_Mono',monospace] text-[9px] leading-[13px] text-[#e8e8e8]">
        {[6400, 6500, 6600, 6700, 6800, 6900, 7000, 7100, 7200, 7300, 7400, 7500, 7600, 7700, 7800, 7900].map((f) => (
          <span key={f}>{f}</span>
        ))}
      </div>
      <svg width="852" height="15" className="block">
        <path d="M307 13h4l6-12 5 12h4M317 1v13" fill="none" stroke="#e0e000" strokeWidth="1" />
        <rect x="317" y="13" width="93" height="1" fill="#007000" />
        <rect x="410" y="13" width="116" height="1" fill="#b000b0" />
      </svg>
      <div className="flex font-['Liberation_Mono',monospace] text-[9px] leading-[10px]">
        <span className="ml-[336px] w-[100px] text-[#008000]">40m amateur</span>
        <span className="text-[#a000a0]">41m broadcast</span>
      </div>
      <svg width="12" height="19" className="absolute left-[327px] top-[66px]">
        <polygon points="1,0 1,13 5,10 9,18 11,17 8,9 12,9" fill="#f8f860" stroke="#000" strokeWidth="0.5" />
      </svg>
    </div>
    <div className="ml-[4px] mt-[24px] flex items-start gap-[8px]">
      <FrequencyCard />
      <BandwidthCard />
      <WaterfallCard />
      <SignalCard />
    </div>
    <div className="ml-[4px] mt-[8px] flex items-start gap-[8px]">
      <div className="h-[60px] w-[466px] shrink-0 bg-white px-[5px] pt-[6px]">
        <b className="block leading-[18px]">Logbook:</b>
        <div className="flex items-center whitespace-nowrap leading-[19px]">
          Call of station that you hear:
          <div className="ml-[3px] h-[18px] w-[86px] border border-[#b8b8b8]" />
        </div>
      </div>
      <div className="h-[60px] w-[509px] shrink-0 bg-white px-[5px] pt-[6px]">
        <b className="block leading-[18px]">Station information:</b>
        <div className="flex items-center whitespace-nowrap leading-[19px]">
          Lookup in databases:
          <PageBtn className="ml-[4px] w-[68px]">fmscan.org</PageBtn>
          <PageBtn className="ml-[7px] w-[60px]">mwlist.org</PageBtn>
          <PageBtn className="ml-[8px] w-[113px]">sw.globaltuners.com</PageBtn>
          <PageBtn className="ml-[8px] w-[85px]">short-wave.info</PageBtn>
        </div>
      </div>
    </div>
  </div>
);

const App = () => (
  <div className="relative h-[879px] w-[1600px] overflow-hidden bg-white">
    <div className="absolute left-[5px] top-[5px] w-[1592px] overflow-hidden border-x-2 border-[#ececec] shadow-[0_0_5px_rgba(0,0,0,0.35)]">
      <TabBar />
      <Toolbar />
      <Page />
    </div>
    <PowerSdr />
  </div>
);

export default App;
